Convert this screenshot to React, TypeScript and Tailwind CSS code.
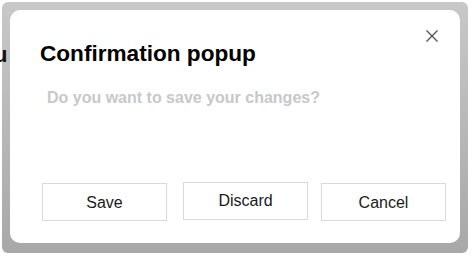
import React from "react";

export default function App() {
  return (
    <div
      className="relative w-[474px] h-[261px] bg-white overflow-hidden pt-[2px] pl-[2px]"
      style={{ fontFamily: '"Liberation Sans", Arial, sans-serif' }}
    >
      <div className="w-[466px] h-[251px] rounded-[6px] bg-linear-to-b from-[#c8c8c8] to-[#a8a8a8] pt-[8px] px-[8px] pb-[10px]">
        <div className="relative w-[450px] h-[233px] rounded-[10px] bg-white flex flex-col">
          <button
            aria-label="Close"
            className="absolute right-[21px] top-[19px] w-[14px] h-[14px] flex items-center justify-center"
          >
            <svg width="14" height="14" viewBox="0 0 14 14" fill="none">
              <path d="M1.5 1.5 L12.5 12.5 M12.5 1.5 L1.5 12.5" stroke="#555" strokeWidth="1.4" />
            </svg>
          </button>
          <h1 className="mt-[31px] pl-[30px] text-[22.6px] leading-[26px] font-bold text-black">
            Confirmation popup
          </h1>
          <p className="mt-[21px] pl-[37px] text-[16px] leading-[20px] font-bold text-[#c8c8c8]">
            Do you want to save your changes?
          </p>
          <div className="mt-[75px] pl-[32px] flex items-start">
            <button className="w-[125px] h-[38px] border border-[#d9d9d9] bg-white text-[16px] text-[#1a1a1a] flex items-center justify-center pt-[1px]">
              Save
            </button>
            <button className="ml-[16px] -mt-[1px] w-[125px] h-[38px] border border-[#d9d9d9] bg-white text-[16px] text-[#1a1a1a] flex items-center justify-center">
              Discard
            </button>
            <button className="ml-[13px] w-[125px] h-[38px] border border-[#d9d9d9] bg-white text-[16px] text-[#1a1a1a] flex items-center justify-center pt-[1px]">
              Cancel
            </button>
          </div>
        </div>
      </div>
      <span className="absolute left-[-6px] top-[42px] text-[22px] leading-[26px] font-bold text-[#111]">
        u
      </span>
    </div>
  );
}
